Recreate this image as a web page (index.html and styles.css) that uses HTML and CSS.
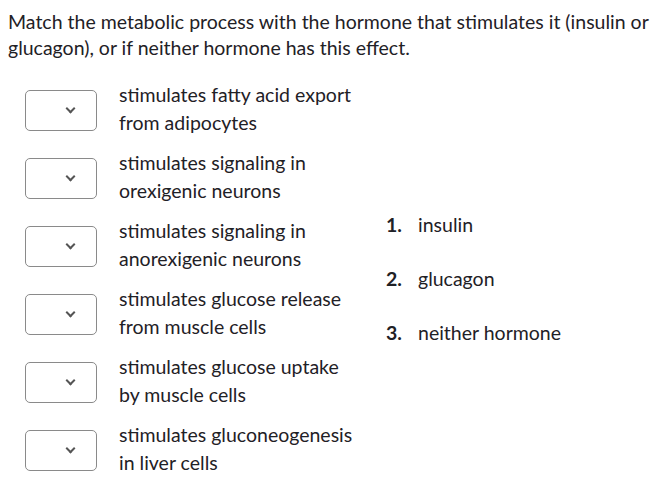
FILE: index.html
```html
<!DOCTYPE html>
<html lang="en">
<head>
    <meta charset="UTF-8">
    <meta name="viewport" content="width=device-width, initial-scale=1.0">
    <title>Matching Question</title>
    <link rel="stylesheet" href="styles.css">
</head>
<body>
    <p class="prompt">Match the metabolic process with the hormone that stimulates it (insulin or glucagon), or if neither hormone has this effect.</p>

    <div class="matching">
        <div class="items">
            <div class="item">
                <div class="picker"><span class="chevron"></span></div>
                <div class="label">stimulates fatty acid export<br>from adipocytes</div>
            </div>
            <div class="item">
                <div class="picker"><span class="chevron"></span></div>
                <div class="label">stimulates signaling in<br>orexigenic neurons</div>
            </div>
            <div class="item">
                <div class="picker"><span class="chevron"></span></div>
                <div class="label">stimulates signaling in<br>anorexigenic neurons</div>
            </div>
            <div class="item">
                <div class="picker"><span class="chevron"></span></div>
                <div class="label">stimulates glucose release<br>from muscle cells</div>
            </div>
            <div class="item">
                <div class="picker"><span class="chevron"></span></div>
                <div class="label">stimulates glucose uptake<br>by muscle cells</div>
            </div>
            <div class="item">
                <div class="picker"><span class="chevron"></span></div>
                <div class="label">stimulates gluconeogenesis<br>in liver cells</div>
            </div>
        </div>

        <ol class="choices">
            <li><span class="num">1.</span>insulin</li>
            <li><span class="num">2.</span>glucagon</li>
            <li><span class="num">3.</span>neither hormone</li>
        </ol>
    </div>
</body>
</html>
```

FILE: styles.css
```css
body {
    margin: 8px;
    font-family: Lato, "Open Sans", sans-serif;
    font-size: 19.5px;
    color: #1f2126;
    background: white;
}
.prompt {
    margin: 0;
    padding-top: 1px;
    line-height: 26px;
}
.matching {
    display: flex;
    align-items: center;
    margin-top: 20px;
}
.items {
    display: flex;
    flex-direction: column;
    gap: 10px;
    padding-left: 17px;
    width: 361px;
}
.item {
    display: flex;
    align-items: center;
    gap: 22px;
}
.picker {
    width: 48px;
    height: 39px;
    padding-right: 22px;
    border: 1px solid #8a8a8a;
    border-radius: 5px;
    display: flex;
    align-items: center;
    justify-content: flex-end;
}
.chevron {
    width: 5px;
    height: 5px;
    border-right: 2px solid #555;
    border-bottom: 2px solid #555;
    transform: rotate(45deg);
    margin-top: -3px;
}
.label {
    line-height: 28px;
    padding-bottom: 2px;
}
.choices {
    list-style: none;
    margin: 0;
    padding: 0 0 2px;
    display: flex;
    flex-direction: column;
    gap: 28px;
}
.choices li {
    line-height: 26px;
}
.num {
    display: inline-block;
    width: 32px;
    font-weight: bold;
}
```
